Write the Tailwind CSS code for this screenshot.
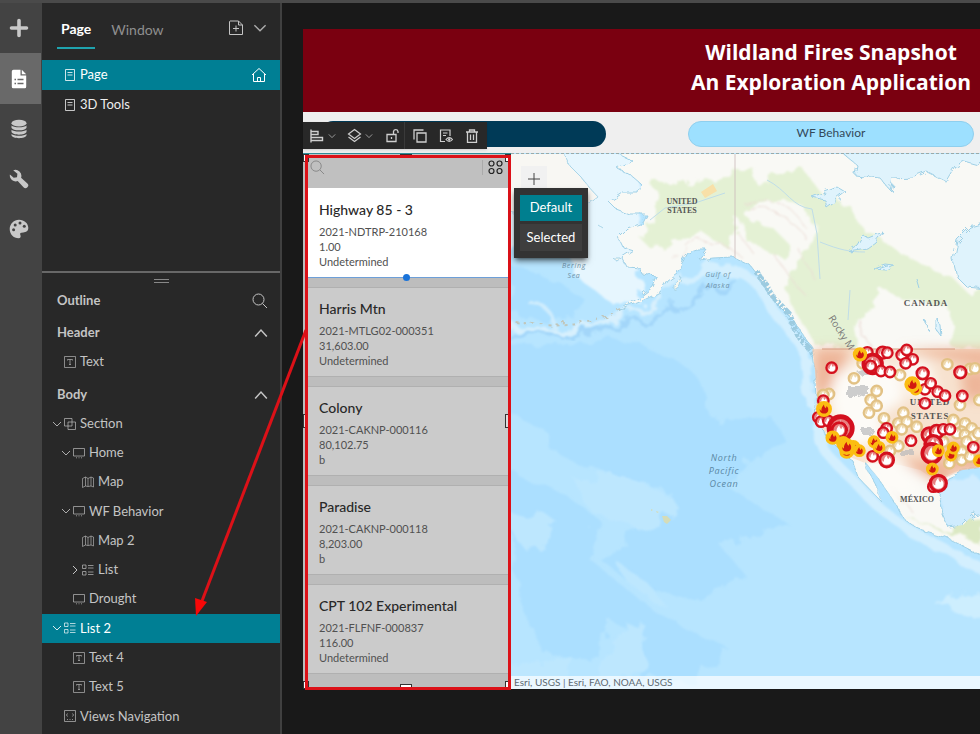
<!DOCTYPE html>
<html lang="en">
<head>
    <meta charset="UTF-8">
    <meta name="viewport" content="width=device-width, initial-scale=1.0">
    <title>Wildland Fires Snapshot - Builder</title>
    <script src="https://cdn.jsdelivr.net/npm/@tailwindcss/browser@4"></script>
</head>
<body class="h-screen overflow-hidden bg-[#191919] font-[Lato,sans-serif] text-[13px] text-[#c4c4c4]">
    <!-- Shared icons -->
    <svg class="hidden">
        <symbol id="i-down" viewBox="0 0 10 10"><path d="M1 3l4 4 4-4" fill="none" stroke="currentColor" stroke-opacity=".85"/></symbol>
        <symbol id="i-right" viewBox="0 0 10 10"><path d="M3 1l4 4-4 4" fill="none" stroke="currentColor"/></symbol>
        <symbol id="i-up" viewBox="0 0 12 12"><path d="M1 9l5-5.500 5 5.500" fill="none" stroke="currentColor" stroke-width="1.300"/></symbol>
        <symbol id="i-page" viewBox="0 0 12 12"><path d="M1.500.5h9v11h-9zM3.500 3.500h5M3.500 6h5" fill="none" stroke="currentColor" stroke-opacity=".8"/></symbol>
        <symbol id="i-text" viewBox="0 0 12 12"><path d="M.5.5h11v11H.5zM3.500 4.500v-1h5v1M6 3.500v5M5 8.500h2" fill="none" stroke="currentColor" stroke-width=".9" stroke-opacity=".7"/></symbol>
        <symbol id="i-section" viewBox="0 0 12 12"><path d="M.5.5h7.500v7.500H.5zM4 4h7.500v7.500H4z" fill="none" stroke="currentColor" stroke-width=".9" stroke-opacity=".75"/></symbol>
        <symbol id="i-view" viewBox="0 0 12 12"><path d="M.5 1.500h11v7.500H.5zM3 10.800h1M5.500 10.800h1M8 10.800h1" fill="none" stroke="currentColor" stroke-width=".9" stroke-opacity=".75"/></symbol>
        <symbol id="i-map" viewBox="0 0 12 12"><path d="M.5 2.500L3.500 1v9l-3 1.500zM3.500 1l2.500 1.500v8L3.500 10M6 2.500L9 1v9l-3 .5M9 1l2.500 1v9L9 10" fill="none" stroke="currentColor" stroke-width=".8" stroke-opacity=".75"/></symbol>
        <symbol id="i-list" viewBox="0 0 12 12"><path d="M.5 1h3.500v3.500H.5zM.5 7.500h3.500v3.500H.5zM6 1.500h5.500M6 4h5.500M6 8h5.500M6 10.500h5.500" fill="none" stroke="currentColor" stroke-width=".9" stroke-opacity=".75"/></symbol>
        <symbol id="i-nav" viewBox="0 0 12 12"><path d="M.5.5h11v11H.5zM3.500 3.500L2.500 5l1 1.500M8.500 3.500l1 1.500-1 1.500M3 9.500h1M5.500 9.500h1M8 9.500h1" fill="none" stroke="currentColor" stroke-width=".9" stroke-opacity=".75"/></symbol>
        <symbol id="i-search" viewBox="0 0 16 16"><circle cx="6.500" cy="6.500" r="5.500" fill="none" stroke="currentColor"/><path d="M10.500 10.500L15 15" stroke="currentColor"/></symbol>
    </svg>

    <div class="relative flex h-full border-t-[3px] border-[#4a4a4a]">
        <!-- Tool rail -->
        <nav class="flex w-[42px] shrink-0 flex-col bg-[#434343] text-[#c8c8c8]">
            <button aria-label="Insert" class="flex h-[50px] w-[41px] items-center justify-center pr-1">
                <svg class="size-5" viewBox="0 0 20 20"><path d="M10 2.500v15M2.500 10h15" stroke="currentColor" stroke-width="3.600" stroke-linecap="round"/></svg>
            </button>
            <button aria-label="Page" class="flex h-[51px] w-[41px] items-center justify-center bg-[#696969] pr-1 text-white">
                <svg class="size-5" viewBox="0 0 20 20"><path fill="currentColor" d="M4.500.8h7v5.700h5.700v11.200a1.500 1.500 0 0 1-1.500 1.500H4.300a1.500 1.500 0 0 1-1.500-1.500V2.500A1.700 1.700 0 0 1 4.500.8zM12.800.8l4.400 4.400h-4.400z"/><path stroke="#696969" stroke-width="1.400" d="M5.500 10.500h1.500M8.500 10.500h6M5.500 14.500h1.500M8.500 14.500h6"/></svg>
            </button>
            <button aria-label="Data" class="flex h-[50px] w-[41px] items-center justify-center pr-1">
                <svg class="size-5" viewBox="0 0 20 20" fill="currentColor"><ellipse cx="10" cy="4.200" rx="7.500" ry="3.400"/><path d="M2.500 6.500c2 2.400 13 2.400 15 0v2.300c-1 3.400-14 3.400-15 0zM2.500 10.800c2 2.400 13 2.400 15 0v2.300c-1 3.400-14 3.400-15 0zM2.500 15c2 2.400 13 2.400 15 0v1.300c-1 3.800-14 3.800-15 0z"/></svg>
            </button>
            <button aria-label="Utilities" class="flex h-[50px] w-[41px] items-center justify-center pr-1">
                <svg class="size-5" viewBox="0 0 20 20"><path fill="currentColor" d="M4.200 1.300a6 6 0 0 1 7.900 7.400l6.300 5.700a2.700 2.700 0 0 1-3.900 3.900l-5.800-6.200A6 6 0 0 1 .9 5.400l3.800 3.400L8 8.200l.4-3.400z"/></svg>
            </button>
            <button aria-label="Theme" class="flex h-[50px] w-[41px] items-center justify-center pr-1">
                <svg class="size-5" viewBox="0 0 20 20"><path fill="currentColor" d="M10 .8c5.400 0 9.300 3.700 9.300 8 0 3.400-2.300 4.600-5 4.600-2.900 0-3.700.7-2.900 2.700.7 1.700 0 3.200-1.700 3.200C4.400 19.300.7 15 .7 10S5 .8 10 .8z"/><g fill="#434343"><circle cx="4.600" cy="10.800" r="1.500"/><circle cx="6.200" cy="6" r="1.500"/><circle cx="11" cy="4" r="1.500"/><circle cx="15.300" cy="7.300" r="1.500"/></g></svg>
            </button>
        </nav>

        <!-- Page and outline panel -->
        <aside class="flex w-[240px] shrink-0 flex-col border-r-2 border-[#404040] bg-[#282828]">
            <section class="h-[268px] shrink-0">
                <div class="flex h-[57px] items-start pr-[13px] pl-[15px]">
                    <div class="flex gap-3">
                        <button class="h-[46px] border-b-2 border-[#1fa3ae] px-1 pt-2 text-sm font-bold text-white">Page</button>
                        <button class="h-[46px] px-1 pt-[7px] text-sm text-[#8f8f8f]">Window</button>
                    </div>
                    <button aria-label="Add page" class="mt-[17px] ml-auto">
                        <svg class="size-4" viewBox="0 0 16 16" fill="none" stroke="currentColor"><path d="M2 1h8.500L14.500 5v9.500h-13V1.500zM10.500 1v4h4M8 5.500v6M5 8.500h6"/></svg>
                    </button>
                    <button aria-label="More" class="mt-[18px] ml-[9px]"><svg class="size-3.5"><use href="#i-down"/></svg></button>
                </div>
                <button class="flex h-[30px] w-full items-center gap-1 bg-[#007f94] pr-[13px] pl-[22px] text-white">
                    <svg class="size-3"><use href="#i-page"/></svg>Page
                    <svg class="ml-auto size-4" viewBox="0 0 16 16" fill="none" stroke="currentColor"><path d="M1 8l7-6.500L15 8M2.500 7v7.500h11V7M6.500 14.500v-4h3v4"/></svg>
                </button>
                <button class="flex h-[29px] w-full items-center gap-1 pl-[22px] text-[#eee]">
                    <svg class="size-3"><use href="#i-page"/></svg>3D Tools
                </button>
            </section>

            <section class="flex min-h-0 flex-1 flex-col border-t-2 border-[#686868]">
                <div class="mx-auto mt-[6px] h-1 w-[15px] shrink-0 border-y border-[#888]"></div>
                <div class="flex h-9 shrink-0 items-center justify-between pr-3 pl-[15px] font-bold">
                    Outline
                    <button aria-label="Search outline"><svg class="size-4"><use href="#i-search"/></svg></button>
                </div>
                <button class="flex h-7 shrink-0 items-center justify-between pr-3 pl-[15px] font-bold">Header<svg class="size-3.5"><use href="#i-up"/></svg></button>
                <button class="flex h-[29px] shrink-0 items-center gap-1 pl-[22px]"><svg class="size-3"><use href="#i-text"/></svg>Text</button>
                <button class="mt-1 flex h-[29px] shrink-0 items-center justify-between pr-3 pl-[15px] font-bold">Body<svg class="size-3.5"><use href="#i-up"/></svg></button>
                <div class="flex flex-1 flex-col pb-[3px]">
                    <button class="flex flex-1 items-center gap-1 pl-2.5"><span class="flex"><svg class="size-[10px] self-center"><use href="#i-down"/></svg><svg class="ml-[2px] size-3"><use href="#i-section"/></svg></span>Section</button>
                    <button class="flex flex-1 items-center gap-1 pl-[19px]"><span class="flex"><svg class="size-[10px] self-center"><use href="#i-down"/></svg><svg class="ml-[2px] size-3"><use href="#i-view"/></svg></span>Home</button>
                    <button class="flex flex-1 items-center gap-1 pl-[40px]"><svg class="size-3"><use href="#i-map"/></svg>Map</button>
                    <button class="flex flex-1 items-center gap-1 pl-[19px]"><span class="flex"><svg class="size-[10px] self-center"><use href="#i-down"/></svg><svg class="ml-[2px] size-3"><use href="#i-view"/></svg></span>WF Behavior</button>
                    <button class="flex flex-1 items-center gap-1 pl-[40px]"><svg class="size-3"><use href="#i-map"/></svg>Map 2</button>
                    <button class="flex flex-1 items-center gap-1 pl-[28px]"><span class="flex"><svg class="size-[10px] self-center"><use href="#i-right"/></svg><svg class="ml-[2px] size-3"><use href="#i-list"/></svg></span>List</button>
                    <button class="flex flex-1 items-center gap-1 pl-[31px]"><svg class="size-3"><use href="#i-view"/></svg>Drought</button>
                    <button class="flex flex-1 items-center gap-1 bg-[#007f94] pl-2.5 text-white"><span class="flex"><svg class="size-[10px] self-center"><use href="#i-down"/></svg><svg class="ml-[2px] size-3"><use href="#i-list"/></svg></span>List 2</button>
                    <button class="flex flex-1 items-center gap-1 pl-[31px]"><svg class="size-3"><use href="#i-text"/></svg>Text 4</button>
                    <button class="flex flex-1 items-center gap-1 pl-[31px]"><svg class="size-3"><use href="#i-text"/></svg>Text 5</button>
                    <button class="flex flex-1 items-center gap-1 pl-[22px]"><svg class="size-3"><use href="#i-nav"/></svg>Views Navigation</button>
                </div>
            </section>
        </aside>

        <!-- Canvas -->
        <main class="min-w-0 flex-1 overflow-hidden pt-[26px] pb-[45px] pl-[21px]">
            <div class="flex h-full min-w-[1056px] flex-col bg-[#efefef]">
                <header class="flex h-[83px] shrink-0 flex-col justify-center bg-[#7a0010] pb-2 text-center font-['Open_Sans',sans-serif] text-[21px] leading-[30px] font-bold text-white">
                    <h1>Wildland Fires Snapshot<br>An Exploration Application</h1>
                </header>
                <nav class="relative flex h-[41px] shrink-0 items-center gap-[82px] pt-[2px] pl-[17px]">
                    <button aria-label="Home" class="h-[26px] w-[286px] rounded-full bg-[#003a57]"></button>
                    <button class="h-[26px] w-[286px] rounded-full border border-[#8fcfee] bg-[#9de0ff] pb-px text-xs text-[#33495a]">WF Behavior</button>
                    <!-- Widget toolbar -->
                    <div class="absolute top-[10px] left-0 z-20 flex h-[27px] w-[184px] items-center bg-[#282828] text-[#cfcfcf] shadow">
                        <button aria-label="Align" class="flex items-center gap-1 pl-[7px]">
                            <svg class="size-[14px]" viewBox="0 0 14 14" fill="none" stroke="currentColor"><path d="M1 .5v13M1 2.500h7v3H1M1 8.500h11.500v3H1" stroke-width="1.400"/></svg>
                            <svg class="size-2"><use href="#i-down"/></svg>
                        </button>
                        <button aria-label="Arrange" class="flex items-center gap-[3px] pl-[11px]">
                            <svg class="size-[15px]" viewBox="0 0 15 15" fill="none" stroke="currentColor"><path d="M7.500 1.500L13.500 6l-6 4.500L1.500 6zM1.500 9l6 4.500 6-4.500" stroke-width="1.200"/></svg>
                            <svg class="size-2"><use href="#i-down"/></svg>
                        </button>
                        <button aria-label="Unlock" class="flex pl-3">
                            <svg class="size-[15px]" viewBox="0 0 15 15" fill="none" stroke="currentColor" stroke-width="1.300"><path d="M2 6.500h9v7H2zM8.500 6.500V3.500a2.300 2.300 0 0 1 4.500 0v1.500M6.500 9v2"/></svg>
                        </button>
                        <button aria-label="Duplicate" class="ml-1 flex h-full items-center border-l border-[#3a3a3a] pl-2">
                            <svg class="size-[14px]" viewBox="0 0 14 14" fill="none" stroke="currentColor" stroke-width="1.300"><path d="M1 10.500V1h9.500M4 4h9v9H4z"/></svg>
                        </button>
                        <button aria-label="Pending list" class="flex pl-3">
                            <svg class="size-[14px]" viewBox="0 0 14 14" fill="none" stroke="currentColor" stroke-width="1.200"><path d="M6 12.500H1.500V1h9.500v6M4 4h4.500M4 6.500h3M7 10.500c2-2.500 4.500-2.500 6.500 0-2 2.500-4.500 2.500-6.500 0z"/><circle cx="10.200" cy="10.500" r=".6"/></svg>
                        </button>
                        <button aria-label="Delete" class="flex pl-3">
                            <svg class="size-[14px]" viewBox="0 0 14 14" fill="none" stroke="currentColor" stroke-width="1.300"><path d="M1 3h12M4.500 3V1h5v2M2.500 3v10.300h9V3M5.500 5.500v5.500M8.500 5.500v5.500"/></svg>
                        </button>
                    </div>
                </nav>

                <div class="flex min-h-0 flex-1">
                    <!-- List widget -->
                    <section class="relative w-[208px] shrink-0 border-t border-[#2e8c99] bg-[#bdbdbd] pl-[2px]">
                        <div class="flex h-full flex-col overflow-hidden">
                            <div class="flex h-[34px] shrink-0 items-start justify-between bg-[#c0c0c0] pt-[6px] pr-2 pl-[5px] text-[#858585]">
                                <button aria-label="Search" class="flex"><svg class="size-[15px]"><use href="#i-search"/></svg></button>
                                <button aria-label="Actions" class="flex border-l border-[#aaa] pl-[5px] text-[#222]">
                                    <svg class="size-[15px]" viewBox="0 0 15 15" fill="none" stroke="currentColor" stroke-width="1.200"><circle cx="3.500" cy="3.500" r="2.500"/><circle cx="11.500" cy="3.500" r="2.500"/><circle cx="3.500" cy="11" r="2.500"/><circle cx="11.500" cy="11" r="2.500"/></svg>
                                </button>
                            </div>
                            <div class="flex flex-col gap-[9px] text-[11px] leading-[15px] text-[#515151]">
                                <article class="relative h-[90px] border-b border-[#6d9fd8] bg-white px-[14px] pt-3">
                                    <h2 class="mb-1 text-sm leading-5 font-medium text-[#282828]">Highway 85 - 3</h2>
                                    <p>2021-NDTRP-210168</p><p>1.00</p><p>Undetermined</p>
                                    <span class="absolute -bottom-1 left-[98px] size-[7px] rounded-full bg-[#1a73d9]"></span>
                                </article>
                                <article class="h-[90px] border-y border-[#b0b0b0] bg-[#cbcbcb] px-[14px] pt-[11px]">
                                    <h2 class="mb-1 text-sm leading-5 font-medium text-[#282828]">Harris Mtn</h2>
                                    <p>2021-MTLG02-000351</p><p>31,603.00</p><p>Undetermined</p>
                                </article>
                                <article class="h-[90px] border-y border-[#b0b0b0] bg-[#cbcbcb] px-[14px] pt-[11px]">
                                    <h2 class="mb-1 text-sm leading-5 font-medium text-[#282828]">Colony</h2>
                                    <p>2021-CAKNP-000116</p><p>80,102.75</p><p>b</p>
                                </article>
                                <article class="h-[90px] border-y border-[#b0b0b0] bg-[#cbcbcb] px-[14px] pt-[11px]">
                                    <h2 class="mb-1 text-sm leading-5 font-medium text-[#282828]">Paradise</h2>
                                    <p>2021-CAKNP-000118</p><p>8,203.00</p><p>b</p>
                                </article>
                                <article class="h-[90px] border-y border-[#b0b0b0] bg-[#cbcbcb] px-[14px] pt-[11px]">
                                    <h2 class="mb-1 text-sm leading-5 font-medium text-[#282828]">CPT 102 Experimental</h2>
                                    <p>2021-FLFNF-000837</p><p>116.00</p><p>Undetermined</p>
                                </article>
                            </div>
                        </div>

                        <!-- Resize handles -->
                        <span class="absolute top-0 left-[97px] h-1 w-3 border border-[#333] bg-white"></span>
                        <span class="absolute top-0 left-0 h-2 w-1.5 border border-[#333] bg-white"></span>
                        <span class="absolute top-0 right-0 h-2 w-1.5 border border-[#333] bg-white"></span>
                        <span class="absolute bottom-0 left-[97px] h-[5px] w-3 border border-[#333] bg-white"></span>
                        <span class="absolute right-0 bottom-0 h-2 w-1.5 border border-[#333] bg-white"></span>
                        <span class="absolute bottom-0 left-0 h-2 w-1.5 border border-[#333] bg-white"></span>
                        <span class="absolute top-[260px] right-0 h-[14px] w-1.5 border border-[#333] bg-[#ddd]"></span>
                        <span class="absolute top-[260px] left-0 h-[14px] w-1 border border-[#333] bg-[#ddd]"></span>

                        <!-- Highlight box -->
                        <div class="absolute top-px right-0 -bottom-px left-[2px] z-10 border-[3px] border-[#dc1118]"></div>

                        <!-- Template state menu -->
                        <div class="absolute top-[34px] left-[211px] z-10 flex w-[74px] flex-col gap-[3px] bg-[#333] px-[6px] pt-[7px] pb-[7px] text-white shadow-md shadow-black/50">
                            <button class="h-[26px] bg-[#007f8f]">Default</button>
                            <button class="h-[27px] bg-[#3e3e3e]">Selected</button>
                        </div>
                    </section>

                    <!-- Map widget -->
                    <section class="relative min-w-0 flex-1 overflow-hidden border-t border-dashed border-[#9aa] bg-[#b7e5ff]">
                        <svg class="h-full w-full" viewBox="511 154 848 535" preserveAspectRatio="xMinYMin slice">
                            <defs>
                                <filter id="rough"><feTurbulence type="fractalNoise" baseFrequency=".09" numOctaves="4" seed="4"/><feDisplacementMap in="SourceGraphic" scale="9"/></filter>
                                <filter id="soft"><feTurbulence type="fractalNoise" baseFrequency=".05" numOctaves="4" seed="9" result="n"/><feDisplacementMap in="SourceGraphic" in2="n" scale="22"/><feGaussianBlur stdDeviation="1"/></filter>
                                <filter id="haze"><feGaussianBlur stdDeviation="6"/></filter>
                                <path id="flame" d="M0 11c-7 0-11-5-10-11 1 2 2 4 4 4-1-6 2-10 6-15 0 4 2 7 4 9 1-1 2-2 2-5 4 3 5 7 4 11-1 4-4 7-10 7z"/>
                                <clipPath id="mainland"><path id="land" d="M617 140L617 153 632 160 617 168 633 177 640 183 638 193 623 193 609 202 617 210 630 215 647 215 643 223 627 228 618 237 623 247 633 250 622 257 627 267 640 268 643 275 657 277 653 287 640 297 618 311 642 301 660 292 667 280 677 273 682 263 688 253 697 250 707 250 700 260 713 258 733 257 750 265 760 278 773 300 793 320 812 347 815 370 817 397 815 417 827 437 843 453 852 460 858 477 877 497 882 502 878 490 867 470 864 461 880 480 893 500 905 520 920 530 947 538 990 560 990 511 973 515 963 525 948 527 942 513 938 493 947 477 963 470 990 466 990 140z"/></clipPath>
                            </defs>

                            <!-- Sea floor -->
                            <g filter="url(#soft)" fill="#abdfff">
                                <path d="M511 265C540 272 570 285 590 305L560 318 545 322 505 312z"/>
                                <path d="M505 345C560 350 620 330 655 350S700 370 705 400 720 420 770 415L790 445 740 465 730 490 790 525 720 545 745 575 700 600 640 590 600 560 660 510 670 490 590 470 550 450 545 430 505 410z"/>
                                <path d="M505 470L560 490 600 520 590 560 640 600 670 620 730 650 720 660 690 680 640 680 650 640 610 620 590 660 540 650 520 600z"/>
                            </g>
                            <path d="M735 280C680 300 630 345 505 333" fill="none" stroke="#a3d6f9" stroke-width="5" filter="url(#soft)"/>
                            <g filter="url(#soft)">
                                <path fill="#e6f6fe" d="M550 140H640V300L615 306 575 275 570 255 505 250V140z"/>
                                <path d="M505 324C560 345 640 315 664 292" fill="none" stroke="#d8f0fd" stroke-width="5"/>
                                <path d="M530 304C550 303 555 320 552 328" fill="none" stroke="#d0edfd" stroke-width="4"/>
                                <path d="M665 291C700 262 745 260 765 295S800 340 806 358 808 410 820 438 845 470 862 490 900 530 990 572" fill="none" stroke="#d3effe" stroke-width="10"/>
                                <path fill="#cfecfe" d="M940 480H1000V530H940z"/>
                                <path fill="#bde7fe" d="M505 515L540 510 560 525 540 550 520 545zM575 480L620 475 670 495 680 510 640 530 590 510zM615 560L650 585 665 605 650 600 625 580zM610 640L640 620 650 670 600 680zM505 670L570 655 560 690H505z"/>
                                <path fill="#cdeefe" d="M935 605L990 590V620z"/>
                            </g>
                            <path fill="#d5dcb8" d="M662 516l5 0 4 4-4 4-3-2zM656 511l3 1-2 1zM651 509l2 1-2 1z"/>

                            <!-- Land -->
                            <g filter="url(#rough)">
                                <path fill="#f8f7f3" stroke="#a9d5e8" d="M500 140H557L569 165 580 176 588 186 598 197 590 203 575 198 560 215 500 210z"/>
                                <use href="#land" fill="#f9f9f5" stroke="#9fd0e6"/>
                                <path d="M620 309C590 325 560 327 515 322" fill="none" stroke="#c0c7bd" stroke-width="2" stroke-dasharray="3 5"/>
                                <path d="M674 284l8-6-2 8-6 4zM613 258l8 0-4 3zM598 225l6 4" fill="#f4f6ef" stroke="#a9d5e8"/>
                                <path d="M757 272l18 27 13 14 9 21 18 22" fill="none" stroke="#9ccbe0" stroke-width="6" stroke-dasharray="4 2"/>
                            </g>
                            <g clip-path="url(#mainland)">
                                <g filter="url(#soft)" fill="#e4f1d4">
                                    <path d="M655 182L720 180 750 165 760 205 735 225 730 250 700 230 680 240 650 248 640 238 660 215z"/>
                                    <path d="M740 180L770 185 775 170 800 165 822 195 850 205 862 230 885 240 905 258 950 275 965 290 995 290V350H955L948 325 950 305 905 300 880 290 860 315 855 345 820 350 800 320 785 290 795 260 815 255 812 215 790 200 755 205z"/>
                                    <path d="M740 215L770 225 790 245 780 255 745 240z"/>
                                    <path d="M900 515L945 530 980 545 990 520 970 520 950 530z" fill="#dbe9c3"/>
                                </g>
                                <g filter="url(#soft)" fill="none" stroke="#ead9d3">
                                    <path d="M745 205c20-8 50 0 58 20M750 212c20-5 50 10 56 28M670 260l25-22 25 5 20 12M800 250l15 30M770 250l30 40M735 230l20 25M860 320l10 30M880 470l20 30M890 480l24 34"/>
                                </g>
                                <path fill="#f8e0a8" d="M701 192l12-8 4 7-12 7z"/>
                                <path d="M735 140V258l17 15 20 25" fill="none" stroke="#c9b9b9" stroke-width=".8"/>
                                <path d="M767 180c20 10 25 27 45 29l5 25 3 45M820 242c20 8 30 10 45 10M650 220l15-12 30-5 30-10M850 290l-2 30" fill="none" stroke="#bfdde8"/>

                                <!-- Heat tint over the states -->
                                <path fill="#f6d9c2" d="M810 349H990V470L960 470 935 480 920 470 900 465 865 463 845 455 815 420z" opacity=".75"/>
                                <g filter="url(#haze)">
                                    <path fill="#e9a381" opacity=".7" d="M815 349H850L840 375 820 400 815 385zM900 349H990V368L960 362zM960 370H990V400H965zM900 460H950V485L930 480zM940 440H990V470H950z"/>
                                    <path fill="#fdfbf7" d="M835 375L865 360 900 368 905 400 880 415 885 440 850 450 830 405zM900 355L930 365 940 400 910 395zM865 465L895 455 915 480 925 500 880 495z"/>
                                </g>
                                <g fill="#b9b9bb" filter="url(#rough)"><path d="M848 386h20v8l-8 4h-12zM856 371l8-3 8 4-10 4zM900 450h14v5h-14zM862 428h12l-4 6h-8z" opacity=".7"/></g>
                                <path d="M822 349H955" stroke="#d69b80" stroke-width="1"/>
                            </g>

                            <!-- Northern water -->
                            <g filter="url(#rough)" fill="#dff3fc" stroke="#9fd0e6">
                                <path d="M833 145L857 165 855 175 880 178 890 190 893 179 913 178 927 172 947 182 960 160 978 165 990 145z"/>
                                <path d="M995 220L970 227 957 240 953 260 957 277 967 287 995 290z"/>
                                <path d="M812 197L830 190 837 187 847 193 838 200 827 208 825 200z"/>
                                <path d="M848 251L857 245 863 235 868 238 883 232 875 242 867 248z"/>
                                <path d="M874 269l12-4 8 1-8 4zM925 320l3 10M936 317l5 9 1 11-6-8zM916 278l3 10"/>
                            </g>

                            <!-- Place labels -->
                            <g text-anchor="middle" class="font-['Liberation_Serif',serif] font-bold" fill="#555">
                                <g class="text-[8px]"><text x="682" y="204">UNITED</text><text x="682" y="213">STATES</text><text x="917" y="502">MÉXICO</text></g>
                                <text x="926" y="306" class="text-[9px] tracking-widest">CANADA</text>
                                <g class="text-[9px] tracking-widest"><text x="930" y="405">UNITED</text><text x="930" y="419">STATES</text></g>
                            </g>
                            <g text-anchor="middle" class="font-['Open_Sans',sans-serif] text-[7px] tracking-widest italic" fill="#6f92a8">
                                <text x="574" y="268">Bering</text><text x="574" y="278">Sea</text>
                                <text x="718" y="277">Gulf of</text><text x="718" y="288">Alaska</text>
                                <g class="text-[9px]" fill="#5a87a3"><text x="724" y="461">North</text><text x="724" y="474">Pacific</text><text x="724" y="487">Ocean</text></g>
                            </g>
                            <text transform="translate(828 318) rotate(57)" class="font-['Open_Sans',sans-serif] text-[10px]" fill="#777">Rocky M</text>

                            <g id="fires" transform="translate(780 320) scale(.3333)"></g>
                        </svg>
                        <button aria-label="Add view" class="absolute top-[12px] left-[10px] flex size-[26px] items-center justify-center bg-[#f1f1f1] text-[#444]">
                            <svg class="size-3.5" viewBox="0 0 14 14" stroke="currentColor"><path d="M7 1v12M1 7h12"/></svg>
                        </button>
                        <p class="absolute inset-x-0 bottom-0 h-[13px] bg-white/70 pl-[3px] text-[10px] leading-[13px] text-[#5f6b73]">Esri, USGS | Esri, FAO, NOAA, USGS</p>
                    </section>
                </div>
            </div>
        </main>

        <!-- Pointer from the list widget to its outline row -->
        <svg class="pointer-events-none absolute top-[325px] left-[193px] z-30 h-[290px] w-[115px]" viewBox="0 0 115 290"><path d="M113 2L9 273" stroke="#dc1118" stroke-width="3"/><path d="M3 288L2 270l12 4z" fill="#f80808"/></svg>
    </div>

    <script>
        // x, y and optional radius of each incident
        const incidents = [
            { ring: '#e2c184', fill: '#eed9ae', flame: '#ffffff', points: [[222,175],[147,222],[130,225],[248,130],[360,165],[272,240],[290,213],[290,257],[267,278],[312,295],[370,278],[355,310],[380,305],[410,320],[365,328],[355,378],[330,393],[502,133],[570,147],[585,145],[540,255],[520,300],[555,310],[575,325],[545,335],[530,340],[555,345],[580,350],[560,365],[490,365],[545,395],[545,420],[570,410],[508,430],[595,340],[598,240]] },
            { ring: '#d4101e', fill: '#e88080', flame: '#ffffff', points: [[155,143],[262,97],[308,98,18],[322,98],[278,132,28],[272,138],[303,153],[330,156],[365,105],[380,90],[398,118],[377,130],[428,160,18],[435,208],[452,190],[473,215],[495,227],[435,250],[541,157,18],[547,228],[130,242],[115,292],[123,305],[145,303],[182,325,35],[178,330,22],[320,325],[310,338],[393,362],[278,409],[320,420,21],[448,345,22],[470,335,20],[490,328],[510,328],[460,372,25],[455,400,28],[580,382],[460,500],[475,490,24]] },
            { ring: '#fbbd12', fill: '#fbbd12', flame: '#d21a10', points: [[240,103,18],[407,207],[397,193,20],[132,267,20],[158,353,18],[200,395,18],[190,370,18],[220,382,18],[200,380,21],[238,392],[282,365],[297,382],[336,352],[475,392],[513,405],[520,384],[457,447],[598,422]] }
        ];

        const layer = document.getElementById('fires');
        const add = (tag, attrs) => {
            const el = document.createElementNS('http://www.w3.org/2000/svg', tag);
            Object.entries(attrs).forEach(([key, value]) => el.setAttribute(key, value));
            layer.appendChild(el);
        };

        incidents.forEach(({ ring, fill, flame, points }) => {
            points.forEach(([x, y, r = 16]) => {
                add('circle', { cx: x, cy: y, r: r, fill: fill, stroke: ring, 'stroke-width': r / 2.5 });
                add('use', { href: '#flame', fill: flame, transform: `translate(${x} ${y}) scale(${r / 16})` });
            });
        });
    </script>
</body>
</html>
